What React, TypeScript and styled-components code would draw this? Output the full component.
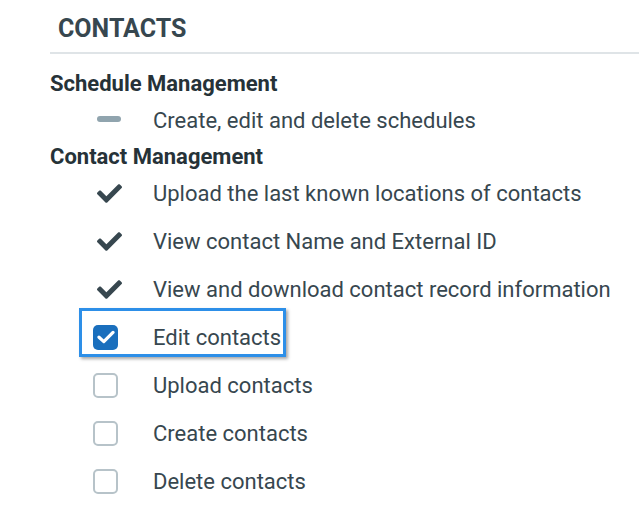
import { createGlobalStyle } from "styled-components";
import styled from "styled-components";
import { FaCheck } from "react-icons/fa";

const GlobalStyle = createGlobalStyle`
    body {
        margin: 0;
        background: #fff;
        font-family: Roboto, "Liberation Sans", Arial, sans-serif;
    }
`

const Panel = styled.div`
    padding-left: 50px;
    display: flex;
    flex-direction: column;
`
const Header = styled.div`
    height: 54px;
    border-bottom: 2px solid #dfe4e7;
    display: flex;
    align-items: center;
    padding-left: 8px;
    padding-top: 4px;
    box-sizing: border-box;
    font-size: 25px;
    font-weight: 700;
    color: #37474f;
    margin-bottom: 17px;
`
const SectionTitle = styled.div`
    height: 25px;
    display: flex;
    align-items: center;
    font-size: 22px;
    font-weight: 700;
    color: #263238;
`
const Row = styled.div<{ $highlighted?: boolean }>`
    position: relative;
    height: 48px;
    display: inline-flex;
    align-self: flex-start;
    align-items: center;
    margin-left: 43px;
    font-size: 22px;
    color: #37474f;

    ${(p) => p.$highlighted && `
        &::after {
            content: "";
            position: absolute;
            top: -5px;
            bottom: 4px;
            left: -14px;
            right: -5px;
            border: 3px solid #2d8fe8;
            box-shadow: 2px 2px 3px rgba(0, 0, 0, 0.35);
            pointer-events: none;
        }
    `}
`
const IconSlot = styled.div`
    width: 60px;
    display: flex;
    align-items: center;
`
const Dash = styled.span`
    display: block;
    width: 24px;
    height: 6px;
    border-radius: 3px;
    background: #90a4ae;
    margin-left: 4px;
    margin-top: -2px;
`
const Tick = styled.span`
    display: flex;
    margin-left: 4px;
    color: #37474f;
`
const Box = styled.span<{ $checked?: boolean }>`
    width: 25px;
    height: 25px;
    box-sizing: border-box;
    border-radius: 5px;
    display: flex;
    align-items: center;
    justify-content: center;
    border: ${(p) => (p.$checked ? "none" : "2px solid #b7c3c9")};
    background: ${(p) => (p.$checked ? "#1a6fbd" : "#fff")};
`

type Mark = "dash" | "tick" | "on" | "off"

const Icon = ({ mark }: { mark: Mark }) => {
    if (mark === "dash") return <Dash />
    if (mark === "tick") return <Tick><FaCheck size={25} /></Tick>
    return (
        <Box $checked={mark === "on"}>
            {mark === "on" && (
                <svg width="18" height="14" viewBox="0 0 18 14">
                    <path d="M2 7.2 L6.8 11.6 L16 2.4" fill="none" stroke="#fff" strokeWidth="3.2" strokeLinecap="round" strokeLinejoin="round" />
                </svg>
            )}
        </Box>
    )
}

const Item = ({ mark, label, highlighted }: { mark: Mark; label: string; highlighted?: boolean }) => (
    <Row $highlighted={highlighted}>
        <IconSlot><Icon mark={mark} /></IconSlot>
        {label}
    </Row>
)

const App = () => {
    return (
        <>
            <GlobalStyle />
            <Panel>
                <Header>CONTACTS</Header>
                <SectionTitle>Schedule Management</SectionTitle>
                <Item mark="dash" label="Create, edit and delete schedules" />
                <SectionTitle>Contact Management</SectionTitle>
                <Item mark="tick" label="Upload the last known locations of contacts" />
                <Item mark="tick" label="View contact Name and External ID" />
                <Item mark="tick" label="View and download contact record information" />
                <Item mark="on" label="Edit contacts" highlighted />
                <Item mark="off" label="Upload contacts" />
                <Item mark="off" label="Create contacts" />
                <Item mark="off" label="Delete contacts" />
            </Panel>
        </>
    )
}
export default App;
